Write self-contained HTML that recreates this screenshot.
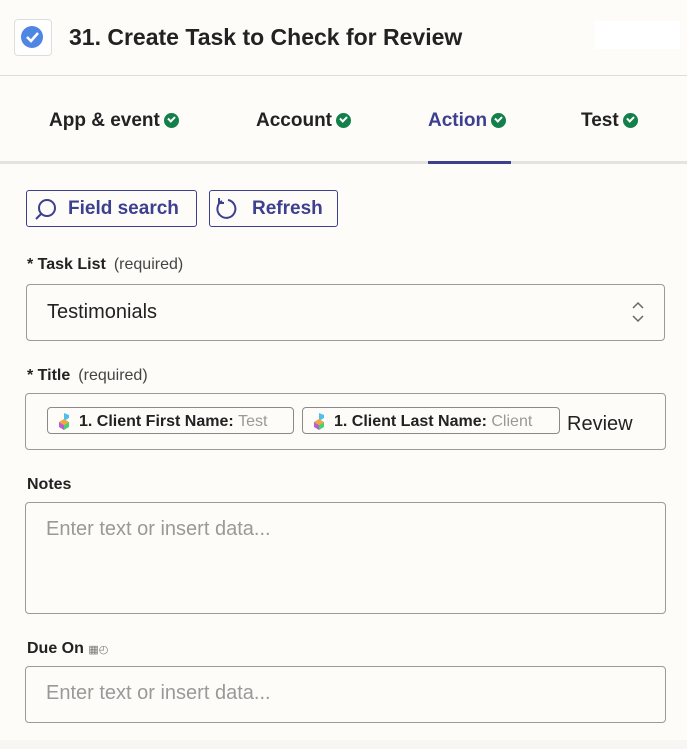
<!DOCTYPE html>
<html><head><style>
body{margin:0;width:687px;height:749px;background:#fdfcf9;font-family:"Liberation Sans",sans-serif;position:relative;overflow:hidden;color:#2b2358}
.a{position:absolute}
.chk{display:inline-block;width:15px;height:15px;border-radius:50%;background:#13804b;vertical-align:-2px;margin-left:4px;position:relative}
.chk:after{content:"";position:absolute;left:4px;top:3px;width:5px;height:3px;border-left:2px solid #fff;border-bottom:2px solid #fff;transform:rotate(-45deg)}
.tab{font-size:19px;font-weight:bold;color:#222;top:110px}
.box{border:1px solid #9a9a9a;border-radius:4px;background:#fdfcf9}
.lbl{font-size:16px;color:#222;font-weight:bold}
.req{color:#444;font-weight:normal;margin-left:8px}
.ph{font-size:20px;color:#999}
.pill{border:1px solid #8a8a8a;border-radius:4px;height:27px;top:407px;font-size:16px;color:#222;line-height:27px;padding-left:31px;box-sizing:border-box;white-space:nowrap;overflow:hidden}
.pill b{font-weight:bold}
.pill span{color:#999}
.ic{position:absolute;left:10px;top:5px;width:12px;height:17px}
.btn{font-size:19px;color:#3d3f8f;font-weight:bold}
</style></head><body>
<div class="a" style="left:14px;top:19px;width:36px;height:35px;border:1px solid #ddd;border-radius:4px;background:#fff"></div>
<div class="a" style="left:21px;top:26px;width:22px;height:22px;border-radius:50%;background:#4f86e3"></div>
<svg class="a" style="left:21px;top:26px" width="22" height="22"><path d="M6 11l4 4 7-8" stroke="#fff" stroke-width="2.5" fill="none"/></svg>
<div class="a" style="left:69px;top:24px;font-size:23px;font-weight:bold;color:#222">31. Create Task to Check for Review</div>
<div class="a" style="left:595px;top:21px;width:85px;height:28px;background:#fff"></div>
<div class="a" style="left:0;top:75px;width:687px;height:1px;background:#ddd"></div>
<div class="a tab" style="left:49px">App &amp; event<span class="chk"></span></div>
<div class="a tab" style="left:256px">Account<span class="chk"></span></div>
<div class="a tab" style="left:428px;color:#3d3f8f">Action<span class="chk"></span></div>
<div class="a tab" style="left:581px">Test<span class="chk"></span></div>
<div class="a" style="left:0;top:161px;width:687px;height:3px;background:#e3e3e1"></div>
<div class="a" style="left:428px;top:161px;width:83px;height:3px;background:#3d3f8f"></div>
<div class="a" style="left:26px;top:190px;width:169px;height:35px;border:1px solid #3d3f8f;border-radius:3px"></div>
<svg class="a" style="left:33px;top:198px" width="26" height="24"><circle cx="14" cy="10" r="8" stroke="#3d3f8f" stroke-width="2" fill="none"/><path d="M8 16l-5 5" stroke="#3d3f8f" stroke-width="2"/></svg>
<div class="a btn" style="left:68px;top:198px">Field search</div>
<div class="a" style="left:209px;top:190px;width:127px;height:35px;border:1px solid #3d3f8f;border-radius:3px"></div>
<svg class="a" style="left:215px;top:196px" width="26" height="26"><path d="M7 5A9 9 0 1 0 13 4" stroke="#3d3f8f" stroke-width="2" fill="none"/><path d="M4 2v5h5" stroke="#3d3f8f" stroke-width="2" fill="none"/></svg>
<div class="a btn" style="left:252px;top:198px">Refresh</div>
<div class="a lbl" style="left:27px;top:256px">* Task List<span class="req">(required)</span></div>
<div class="a box" style="left:26px;top:284px;width:637px;height:55px"></div>
<div class="a" style="left:47px;top:301px;font-size:20px;color:#222">Testimonials</div>
<svg class="a" style="left:630px;top:300px" width="16" height="24"><path d="M3 8l5-5 5 5M3 16l5 5 5-5" stroke="#666" stroke-width="1.5" fill="none"/></svg>
<div class="a lbl" style="left:27px;top:367px">* Title<span class="req">(required)</span></div>
<div class="a box" style="left:25px;top:393px;width:639px;height:55px"></div>
<div class="a pill" style="left:47px;width:247px"><svg class="ic" viewBox="0 0 12 17"><path d="M6 0v8l5-3V2z" fill="#4ec0ef"/><path d="M1 9l5-3 5 3-5 3z" fill="#f7a43b"/><path d="M1 9v5l5 3v-5z" fill="#b85fd0"/><path d="M11 9v5l-5 3v-5z" fill="#4ccf70"/></svg><b>1. Client First Name: </b><span>Test</span></div>
<div class="a pill" style="left:302px;width:258px"><svg class="ic" viewBox="0 0 12 17"><path d="M6 0v8l5-3V2z" fill="#4ec0ef"/><path d="M1 9l5-3 5 3-5 3z" fill="#f7a43b"/><path d="M1 9v5l5 3v-5z" fill="#b85fd0"/><path d="M11 9v5l-5 3v-5z" fill="#4ccf70"/></svg><b>1. Client Last Name: </b><span>Client</span></div>
<div class="a" style="left:567px;top:413px;font-size:20px;color:#222">Review</div>
<div class="a lbl" style="left:27px;top:476px">Notes</div>
<div class="a box" style="left:25px;top:502px;width:639px;height:110px"></div>
<div class="a ph" style="left:46px;top:518px">Enter text or insert data...</div>
<div class="a lbl" style="left:27px;top:640px">Due On <span style="font-size:11px;color:#777;font-weight:normal">▦◴</span></div>
<div class="a box" style="left:25px;top:666px;width:639px;height:55px"></div>
<div class="a ph" style="left:46px;top:682px">Enter text or insert data...</div>
<div class="a" style="left:0;top:740px;width:687px;height:9px;background:#f7f6f2"></div>
</body></html>
